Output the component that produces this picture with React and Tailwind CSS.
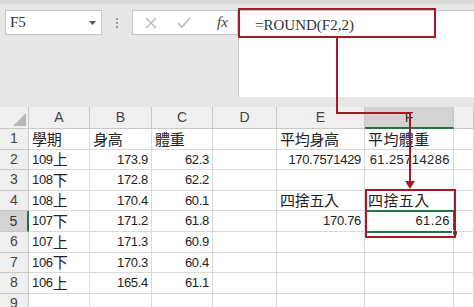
import React from 'react';

const rows = [
  ['學期', '身高', '體重', '', '平均身高', '平均體重', ''],
  ['109上', '173.9', '62.3', '', '170.7571429', '61.25714286', ''],
  ['108下', '172.8', '62.2', '', '', '', ''],
  ['108上', '170.4', '60.1', '', '四捨五入', '四捨五入', ''],
  ['107下', '171.2', '61.8', '', '170.76', '61.26', ''],
  ['107上', '171.3', '60.9', '', '', '', ''],
  ['106下', '170.3', '60.4', '', '', '', ''],
  ['106上', '165.4', '61.1', '', '', '', ''],
  ['', '', '', '', '', '', ''],
];

const letters = ['A', 'B', 'C', 'D', 'E', 'F', ''];

// digits in Liberation, CJK a bit larger like the sheet font
const CellText = ({ s }) =>
  s.split(/([\u4e00-\u9fff]+)/).map((part, i) =>
    /[\u4e00-\u9fff]/.test(part) ? (
      <span key={i} className="text-[15px] font-['Noto_Sans_CJK_TC',sans-serif]">{part}</span>
    ) : (
      <span key={i}>{part}</span>
    )
  );

const App = () => {
  return (
    <div className="relative w-[474px] h-[307px] overflow-hidden bg-[#e6e6e6] font-['Liberation_Sans','Noto_Sans_CJK_TC',sans-serif]">
      <div className="h-[4px] bg-[#d8d8d8]"></div>

      {/* Formula bar */}
      <div className="flex items-start pt-[6px] pl-[5px]">
        <div className="w-[97px] h-[25px] bg-white border border-[#c6c6c6] flex items-center justify-between pl-[4px] pr-[5px]">
          <span className="font-['Liberation_Serif',serif] text-[15px] text-[#333]">F5</span>
          <svg width="7" height="4" viewBox="0 0 7 4"><path d="M0 0h7L3.5 4z" fill="#555" /></svg>
        </div>
        <div className="w-[30px] h-[25px] flex flex-col items-center justify-center gap-[2px]">
          <div className="w-[2px] h-[2px] bg-[#9a9a9a]"></div>
          <div className="w-[2px] h-[2px] bg-[#9a9a9a]"></div>
          <div className="w-[2px] h-[2px] bg-[#9a9a9a]"></div>
        </div>
        <div className="w-[106px] h-[25px] bg-white border border-[#c6c6c6] flex items-center pl-[12px] gap-[20px]">
          <svg width="12" height="12" viewBox="0 0 12 12">
            <path d="M1 1l10 10M11 1L1 11" stroke="#b5b5b5" strokeWidth="1.3" fill="none" />
          </svg>
          <svg width="14" height="11" viewBox="0 0 14 11">
            <path d="M1 6l4 4L13 1" stroke="#b5b5b5" strokeWidth="1.5" fill="none" />
          </svg>
          <span className="font-['Liberation_Serif',serif] italic text-[15px] text-[#444] ml-[6px]">fx</span>
        </div>
        <div className="flex-1 h-[87px] bg-white border-t border-l border-[#c6c6c6] pl-[16px] pt-[2px]">
          <span className="font-['Liberation_Serif',serif] text-[15px] text-[#333]">=ROUND(F2,2)</span>
        </div>
      </div>

      {/* Sheet */}
      <div className="mt-[10px] grid grid-cols-[29px_61px_62px_61px_64px_88px_89px_1fr] bg-white">
        <div className="h-[22px] bg-[#efefef] border-r border-b border-[#c8c8c8] flex items-end justify-end p-[2px]">
          <svg width="13" height="13" viewBox="0 0 13 13"><path d="M13 0v13H0z" fill="#b8b8b8" /></svg>
        </div>
        {letters.map((l, i) => (
          <div
            key={i}
            className={
              i === 5
                ? 'h-[22px] bg-[#d3d3d3] border-r border-b-2 border-r-[#c8c8c8] border-b-[#217346] flex items-center justify-center text-[14px] text-[#333]'
                : 'h-[22px] bg-[#efefef] border-r border-b border-[#c8c8c8] flex items-center justify-center text-[14px] text-[#444]'
            }
          >
            {l}
          </div>
        ))}

        {rows.map((r, ri) => (
          <React.Fragment key={ri}>
            <div
              className={
                ri === 4
                  ? 'h-[20.6px] bg-[#d3d3d3] border-r-2 border-b border-r-[#217346] border-b-[#c8c8c8] flex items-center justify-center text-[14px] text-[#333]'
                  : 'h-[20.6px] bg-[#efefef] border-r border-b border-[#c8c8c8] flex items-center justify-center text-[14px] text-[#444]'
              }
            >
              {ri + 1}
            </div>
            {r.map((c, ci) => {
              const num = /^[\d.]+$/.test(c);
              return (
                <div
                  key={ci}
                  className={
                    'h-[20.6px] border-r border-b border-[#dadada] flex items-center text-[13px] text-[#222] whitespace-nowrap ' +
                    (num ? 'justify-end pr-[3px] ' : 'pl-[3px] ') +
                    (ci === 5 ? 'tracking-[0.4px]' : 'tracking-[-0.3px]')
                  }
                >
                  <CellText s={c} />
                </div>
              );
            })}
          </React.Fragment>
        ))}
      </div>

      {/* Active cell F5 */}
      <div className="absolute left-[365px] top-[210px] w-[90px] h-[23px] border-2 border-[#217346]"></div>
      <div className="absolute left-[452px] top-[230px] w-[6px] h-[6px] bg-[#217346] border border-white"></div>

      {/* Annotation */}
      <div className="absolute left-[238px] top-[8px] w-[198px] h-[30px] border-2 border-[#a31c24]"></div>
      <div className="absolute left-[365px] top-[189px] w-[91px] h-[49px] border-2 border-[#a31c24]"></div>
      <svg className="absolute left-0 top-0 pointer-events-none" width="474" height="307">
        <polyline points="337,38 337,113 410,113 410,182" fill="none" stroke="#a31c24" strokeWidth="2" />
        <path d="M405 181h10l-5 8z" fill="#a31c24" />
      </svg>
    </div>
  );
};

export default App;
